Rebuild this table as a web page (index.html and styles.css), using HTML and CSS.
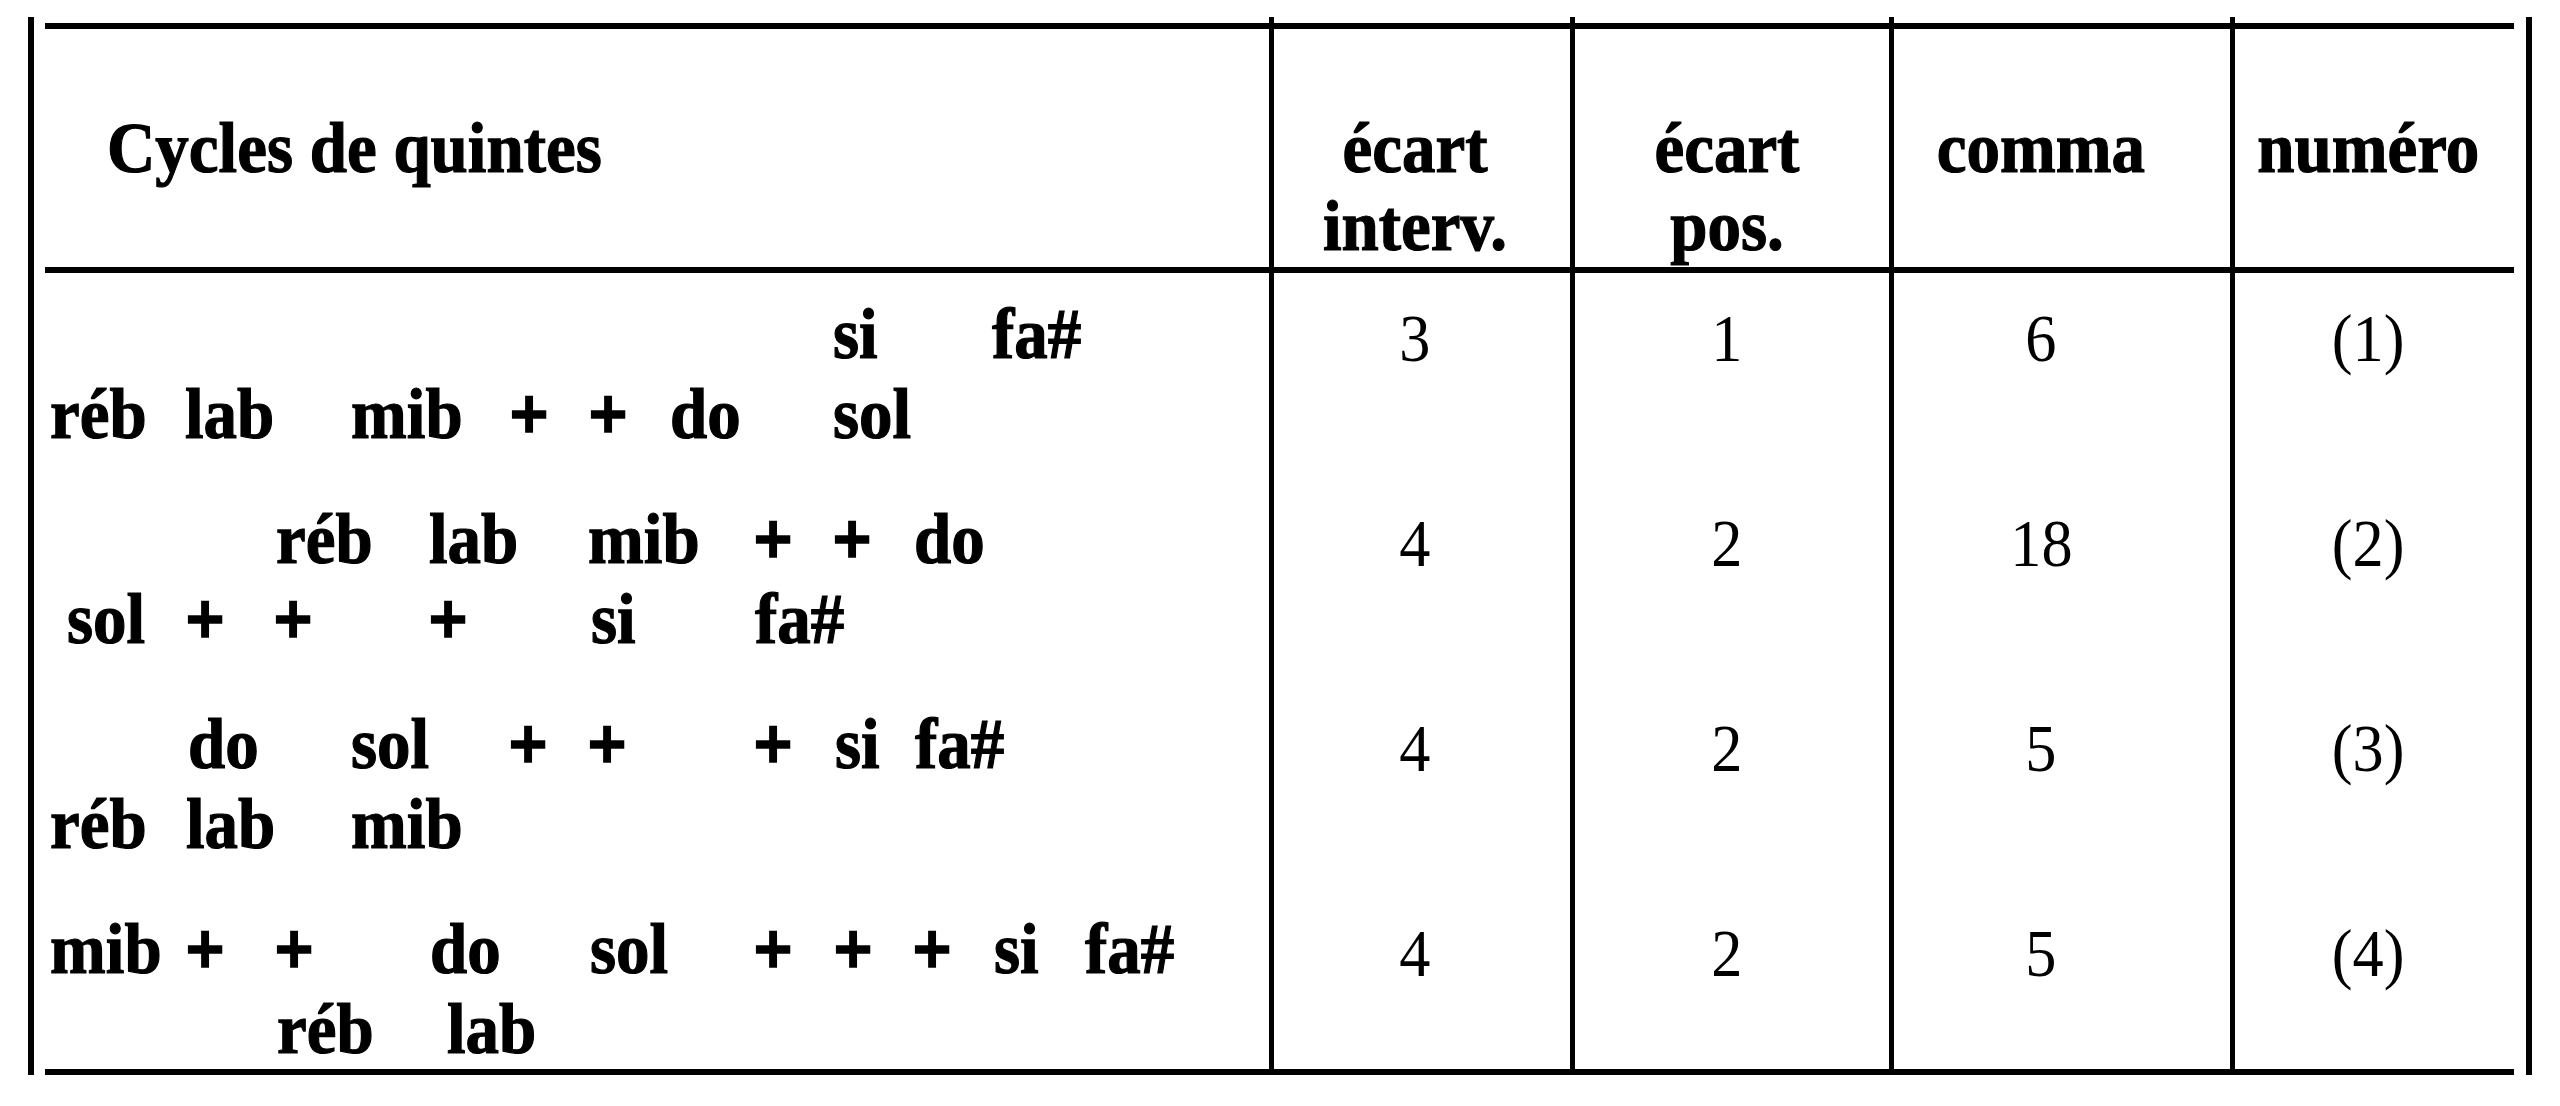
FILE: index.html
```html
<!DOCTYPE html>
<html lang="fr">
<head>
<meta charset="utf-8">
<title>Cycles de quintes</title>
<link rel="stylesheet" href="styles.css">
</head>
<body>
<div class="page">
  <div class="side-rule"></div>
  <div class="grid">
    <div class="vline v1"></div>
    <div class="vline v2"></div>
    <div class="vline v3"></div>
    <div class="vline v4"></div>
    <div class="hrule rt"></div>
    <div class="hrule rh"></div>
    <div class="hrule rb"></div>

    <div class="cell head h ca"><span class="sx">Cycles de quintes</span></div>
    <div class="cell head h cb"><span class="sx">écart<br>interv.</span></div>
    <div class="cell head h cc"><span class="sx">écart<br>pos.</span></div>
    <div class="cell head h cd"><span class="sx">comma</span></div>
    <div class="cell head h ce"><span class="sx">numéro</span></div>

    <div class="cell notes r1 ca">
      <div class="line"><span class="n" style="--x:788px">si</span><span class="n" style="--x:947px">fa#</span></div>
      <div class="line"><span class="n" style="--x:5px">réb</span><span class="n" style="--x:140px">lab</span><span class="n" style="--x:306px">mib</span><span class="n p" style="--x:465px">+</span><span class="n p" style="--x:544px">+</span><span class="n" style="--x:625px">do</span><span class="n" style="--x:788px">sol</span></div>
    </div>
    <div class="cell num r1 cb"><span class="sx">3</span></div>
    <div class="cell num r1 cc"><span class="sx">1</span></div>
    <div class="cell num r1 cd"><span class="sx">6</span></div>
    <div class="cell num r1 ce"><span class="sx">(1)</span></div>

    <div class="cell notes r2 ca">
      <div class="line"><span class="n" style="--x:231px">réb</span><span class="n" style="--x:384px">lab</span><span class="n" style="--x:543px">mib</span><span class="n p" style="--x:709px">+</span><span class="n p" style="--x:788px">+</span><span class="n" style="--x:869px">do</span></div>
      <div class="line"><span class="n" style="--x:22px">sol</span><span class="n p" style="--x:141px">+</span><span class="n p" style="--x:229px">+</span><span class="n p" style="--x:384px">+</span><span class="n" style="--x:546px">si</span><span class="n" style="--x:710px">fa#</span></div>
    </div>
    <div class="cell num r2 cb"><span class="sx">4</span></div>
    <div class="cell num r2 cc"><span class="sx">2</span></div>
    <div class="cell num r2 cd"><span class="sx">18</span></div>
    <div class="cell num r2 ce"><span class="sx">(2)</span></div>

    <div class="cell notes r3 ca">
      <div class="line"><span class="n" style="--x:143px">do</span><span class="n" style="--x:306px">sol</span><span class="n p" style="--x:464px">+</span><span class="n p" style="--x:543px">+</span><span class="n p" style="--x:709px">+</span><span class="n" style="--x:790px">si</span><span class="n" style="--x:870px">fa#</span></div>
      <div class="line"><span class="n" style="--x:5px">réb</span><span class="n" style="--x:141px">lab</span><span class="n" style="--x:306px">mib</span></div>
    </div>
    <div class="cell num r3 cb"><span class="sx">4</span></div>
    <div class="cell num r3 cc"><span class="sx">2</span></div>
    <div class="cell num r3 cd"><span class="sx">5</span></div>
    <div class="cell num r3 ce"><span class="sx">(3)</span></div>

    <div class="cell notes r4 ca">
      <div class="line"><span class="n" style="--x:5px">mib</span><span class="n p" style="--x:141px">+</span><span class="n p" style="--x:230px">+</span><span class="n" style="--x:385px">do</span><span class="n" style="--x:545px">sol</span><span class="n p" style="--x:709px">+</span><span class="n p" style="--x:789px">+</span><span class="n p" style="--x:868px">+</span><span class="n" style="--x:949px">si</span><span class="n" style="--x:1040px">fa#</span></div>
      <div class="line"><span class="n" style="--x:232px">réb</span><span class="n" style="--x:402px">lab</span></div>
    </div>
    <div class="cell num r4 cb"><span class="sx">4</span></div>
    <div class="cell num r4 cc"><span class="sx">2</span></div>
    <div class="cell num r4 cd"><span class="sx">5</span></div>
    <div class="cell num r4 ce"><span class="sx">(4)</span></div>
  </div>
  <div class="side-rule right"></div>
</div>
</body>
</html>
```

FILE: styles.css
```css
html, body {
  margin: 0;
  padding: 0;
  background: #ffffff;
}

body {
  font-family: "Liberation Serif", "Times New Roman", serif;
  color: #000000;
}

.page {
  display: flex;
  align-items: flex-start;
  padding: 17px 0 0 28px;
}

.side-rule {
  width: 6px;
  height: 1058px;
  background: #000000;
  flex: none;
}

.side-rule.right {
  margin-left: 12px;
}

.grid {
  margin-left: 11px;
  display: grid;
  grid-template-columns: 1224px 5px 296px 5px 314px 5px 336px 5px 279px;
  grid-template-rows: 6px 6px 238px 6px 205px 205px 205px 181px 6px;
  flex: none;
}

.vline {
  grid-row: 1 / -1;
  background: #000000;
}
.v1 { grid-column: 2; }
.v2 { grid-column: 4; }
.v3 { grid-column: 6; }
.v4 { grid-column: 8; }

.hrule {
  grid-column: 1 / -1;
  background: #000000;
}
.rt { grid-row: 2; }
.rh { grid-row: 4; }
.rb { grid-row: 9; }

.h  { grid-row: 3; }
.r1 { grid-row: 5; }
.r2 { grid-row: 6; }
.r3 { grid-row: 7; }
.r4 { grid-row: 8; }

.ca { grid-column: 1; }
.cb { grid-column: 3; padding-right: 14px; }
.cc { grid-column: 5; padding-right: 10px; }
.cd { grid-column: 7; padding-right: 42px; }
.ce { grid-column: 9; padding-right: 12px; }

.cell {
  min-width: 0;
  text-align: center;
}

.sx {
  display: inline-block;
  transform: scaleX(0.93);
  transform-origin: center top;
}

.head {
  font-size: 72px;
  font-weight: bold;
  line-height: 78px;
  padding-top: 80px;
  -webkit-text-stroke: 1.2px #000000;
}

.head.ca {
  text-align: left;
  padding-left: 62px;
}

.head.ca .sx {
  transform-origin: left top;
}

.num {
  font-size: 67px;
  font-weight: normal;
  line-height: 80px;
  padding-top: 25px;
}

.notes {
  text-align: left;
  padding-top: 21px;
  font-size: 72px;
  font-weight: bold;
  line-height: 80px;
  -webkit-text-stroke: 1.2px #000000;
}

.line {
  position: relative;
  height: 80px;
}

.n {
  position: absolute;
  top: 0;
  left: var(--x);
  white-space: nowrap;
  transform: scaleX(0.93);
  transform-origin: left top;
}

.n.p {
  -webkit-text-stroke: 3.5px #000000;
}
```
